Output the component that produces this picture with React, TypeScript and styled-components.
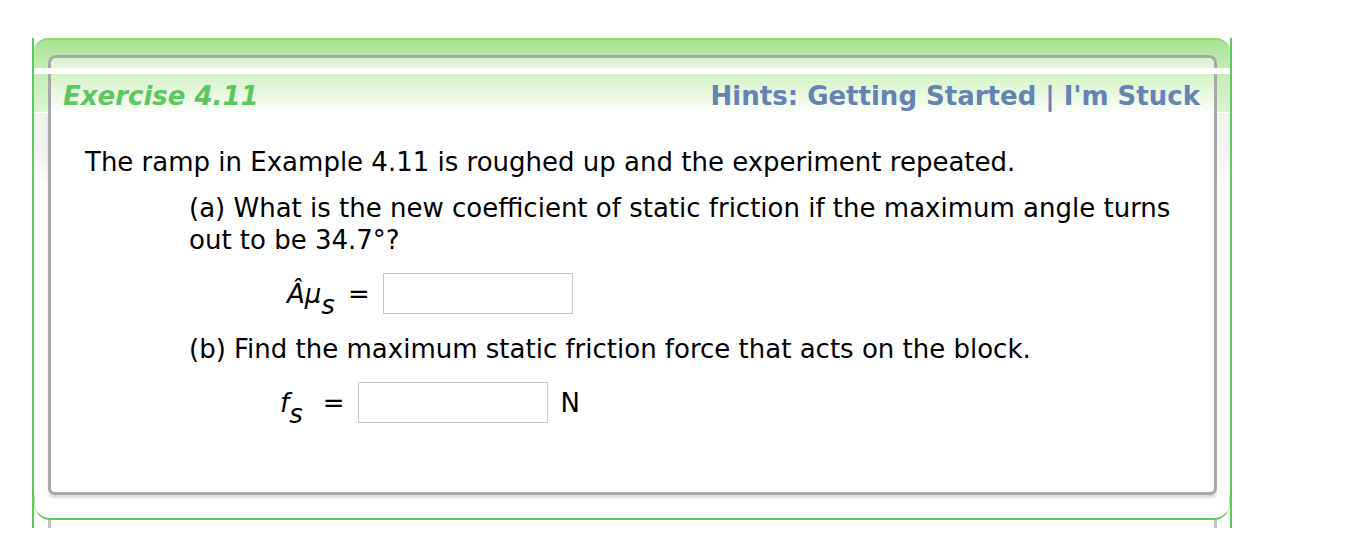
import React from "react";
import styled, { createGlobalStyle } from "styled-components";

const green = "#5fc95f";
const edgeGray = "#a8a8a8";

const GlobalStyle = createGlobalStyle`
  body {
    margin: 0;
    background: #ffffff;
    font-family: "DejaVu Sans", Verdana, sans-serif;
    color: #000000;
  }
`;

const Page = styled.div`
  padding: 38px 0 0 32px;
`;

const Frame = styled.div`
  width: 1200px;
  box-sizing: border-box;
  border-left: 2px solid ${green};
  border-right: 2px solid ${green};

  display: flex;
  flex-direction: column;
`;

const Cap = styled.div`
  height: 30px;
  box-sizing: border-box;
  padding: 15px 13px 0 14px;

  display: flex;

  border-top: 2px solid #8fd87c;
  border-radius: 14px 14px 0 0;
  background: linear-gradient(#a6e392, #c4edb4);
`;

const CapInner = styled.div`
  flex: 1;
  border: 3px solid ${edgeGray};
  border-bottom: none;
  border-radius: 8px 8px 0 0;
  background: linear-gradient(#d9f2cc, #e6f7de);
`;

const Gap = styled.div`
  height: 6px;
  background: #ffffff;
`;

const Row = styled.div`
  display: flex;
`;

interface StripProps {
  $w: number;
  $tone: "green" | "shade";
}

const Strip = styled.div<StripProps>`
  width: ${(p) => p.$w}px;
  flex-shrink: 0;
  background: ${(p) =>
    p.$tone === "green"
      ? "linear-gradient(#c6ecb7, #dcf4d1)"
      : "linear-gradient(#eef5ea 0, #f3f3f3 40px, #ffffff 72px)"};
  border-top: ${(p) => (p.$tone === "shade" ? "1px solid #ffffff" : "none")};
`;

const HeaderBar = styled.div`
  flex: 1;
  height: 38px;
  box-sizing: border-box;
  padding: 5px 14px 0 12px;

  display: flex;
  align-items: center;
  justify-content: space-between;

  border-left: 3px solid ${edgeGray};
  border-right: 3px solid ${edgeGray};
  background: linear-gradient(#d5f2c7, #fbfefa);

  font-size: 26px;
  font-weight: 700;
`;

const Title = styled.span`
  color: #5dc85d;
  font-style: italic;
`;

const Hints = styled.span`
  color: #6882b2;
`;

const Panel = styled.div`
  flex: 1;
  padding: 34px 14px 50px 34px;

  border: 3px solid ${edgeGray};
  border-top: none;
  border-radius: 0 0 7px 7px;
  box-shadow: 0 3px 3px rgba(0, 0, 0, 0.14);
  background: #ffffff;

  font-size: 26px;
  line-height: 32px;
`;

const Intro = styled.p`
  margin: 0 0 14px;
`;

const Part = styled.div`
  margin-left: 104px;
`;

const PartText = styled.p`
  margin: 0;
`;

interface AnswerRowProps {
  $indent: number;
}

const AnswerRow = styled.div<AnswerRowProps>`
  margin: 17px 0 19px;
  padding-left: ${(p) => p.$indent}px;

  display: flex;
  align-items: center;
  gap: 13px;
`;

const Symbol = styled.span`
  font-style: italic;
  white-space: nowrap;
`;

const Sub = styled.span`
  vertical-align: -11px;
  line-height: 0;
`;

interface EqualsProps {
  $before: number;
}

const Equals = styled.span<EqualsProps>`
  margin-left: ${(p) => p.$before}px;
`;

const AnswerBox = styled.input`
  width: 190px;
  height: 41px;
  box-sizing: border-box;
  margin: 0;
  padding: 0 6px;

  border: 1px solid #c6c6c6;
  background: #ffffff;
  outline: none;

  font: inherit;
`;

const Unit = styled.span``;

const Foot = styled.div`
  height: 25px;
  box-sizing: border-box;
  border-left: 1px solid #b9e8ad;
  border-right: 1px solid #b9e8ad;
  border-bottom: 2px solid ${green};
  border-radius: 0 0 16px 16px;
`;

const Stub = styled.div`
  height: 8px;
  display: flex;
`;

const StubInner = styled.div`
  flex: 1;
  margin: 0 13px 0 14px;
  border-left: 3px solid #c4c4c4;
  border-right: 3px solid #c4c4c4;
`;

function App() {
  return (
    <Page>
      <GlobalStyle />
      <Frame>
        <Cap>
          <CapInner />
        </Cap>
        <Gap />
        <Row>
          <Strip $w={14} $tone="green" />
          <HeaderBar>
            <Title>Exercise 4.11</Title>
            <Hints>Hints: Getting Started | I'm Stuck</Hints>
          </HeaderBar>
          <Strip $w={13} $tone="green" />
        </Row>
        <Row>
          <Strip $w={14} $tone="shade" />
          <Panel>
            <Intro>
              The ramp in Example 4.11 is roughed up and the experiment
              repeated.
            </Intro>
            <Part>
              <PartText>
                (a) What is the new coefficient of static friction if the
                maximum angle turns out to be 34.7°?
              </PartText>
              <AnswerRow $indent={98}>
                <Symbol>
                  Âμ<Sub>s</Sub>
                </Symbol>
                <Equals $before={0}>=</Equals>
                <AnswerBox type="text" />
              </AnswerRow>
              <PartText>
                (b) Find the maximum static friction force that acts on the
                block.
              </PartText>
              <AnswerRow $indent={91}>
                <Symbol>
                  f<Sub>s</Sub>
                </Symbol>
                <Equals $before={7}>=</Equals>
                <AnswerBox type="text" />
                <Unit>N</Unit>
              </AnswerRow>
            </Part>
          </Panel>
          <Strip $w={13} $tone="shade" />
        </Row>
        <Foot />
        <Stub>
          <StubInner />
        </Stub>
      </Frame>
    </Page>
  );
}

export default App;
